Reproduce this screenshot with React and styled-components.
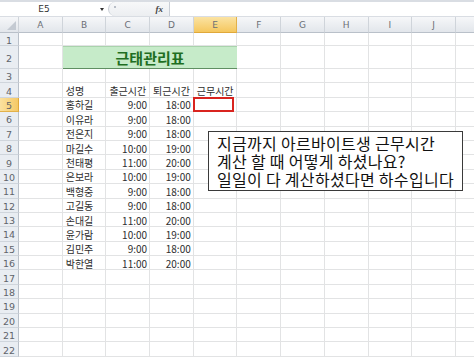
import React from "react";
import styled, { createGlobalStyle } from "styled-components";

const Global = createGlobalStyle`
  html, body { margin: 0; padding: 0; background: #ffffff; overflow: hidden; }
  body { font-family: "Noto Sans CJK KR", "Noto Sans", sans-serif; }
  #root { width: 474px; height: 357px; }
`;

const Page = styled.div`
  position: relative;
  width: 474px;
  height: 357px;
  overflow: hidden;
  background: #fff;
`;

const FormulaStrip = styled.div`
  background: #d9dde3;
  padding: 2px 0 1px 0;
`;

const FormulaBar = styled.div`
  display: flex;
  height: 14px;
  background: #fff;
`;

const NameBox = styled.div`
  width: 108px;
  display: flex;
  align-items: center;
  font-size: 9px;
  color: #333;
  font-family: "DejaVu Sans", sans-serif;
  background: #fff;
`;

const NameText = styled.span`
  flex: 1;
  text-align: center;
  padding-right: 12px;
`;

const Arrow = styled.span`
  width: 0;
  height: 0;
  border-left: 2.5px solid transparent;
  border-right: 2.5px solid transparent;
  border-top: 3px solid #333;
  margin-right: 4px;
`;

const Grip = styled.div`
  width: 60px;
  display: flex;
  align-items: center;
  background: linear-gradient(#f7f8f9, #eceef1);
  border-left: 1px solid #c9ced6;
  border-radius: 7px 0 0 7px;
`;

const Dot = styled.span`
  width: 2px;
  height: 2px;
  background: #b8bec7;
  margin-left: 5px;
  margin-top: -4px;
`;

const Fx = styled.span`
  margin-left: auto;
  margin-right: 6px;
  font-family: "Liberation Serif", serif;
  font-style: italic;
  font-weight: bold;
  font-size: 9px;
  color: #444;
`;

const FormulaInput = styled.div`
  flex: 1;
  background: #fff;
  border-left: 1px solid #c9ced6;
`;

const Sheet = styled.div`
  display: grid;
  grid-template-columns: 19px repeat(11, 43.7px);
  grid-template-rows: 16px 13px 23px repeat(20, 14.4px);
`;

const ColHead = styled.div`
  background: ${(p) =>
    p.$active
      ? "linear-gradient(#fbe3a3, #f5c75e)"
      : "linear-gradient(#f6f7f9, #e2e6eb)"};
  border-right: 1px solid ${(p) => (p.$active ? "#e2b14a" : "#cfd4da")};
  border-bottom: 1px solid ${(p) => (p.$active ? "#e0a83a" : "#b9c0c9")};
  color: #6b6f75;
  font-family: "DejaVu Sans", sans-serif;
  font-size: 9px;
  display: flex;
  align-items: center;
  justify-content: center;
  box-sizing: border-box;
`;

const Corner = styled(ColHead)`
  position: relative;
  &::after {
    content: "";
    position: absolute;
    right: 2px;
    bottom: 2px;
    width: 0;
    height: 0;
    border-left: 9px solid transparent;
    border-bottom: 9px solid #c4cad2;
  }
`;

const RowHead = styled.div`
  background: ${(p) => (p.$active ? "linear-gradient(90deg, #fbe1a0, #f5c965)" : "#e9edf2")};
  border-right: 1px solid ${(p) => (p.$active ? "#e0a83a" : "#b9c0c9")};
  border-bottom: 1px solid ${(p) => (p.$active ? "#e2b14a" : "#cfd5dc")};
  color: #5f646b;
  font-family: "DejaVu Sans", sans-serif;
  font-size: 9.5px;
  display: flex;
  align-items: center;
  justify-content: center;
  box-sizing: border-box;
  padding-top: 2px;
`;

const Cell = styled.div`
  position: relative;
  border-right: 1px solid #e2e3e4;
  border-bottom: 1px solid #e2e3e4;
  box-sizing: border-box;
  font-size: 10px;
  color: #2e2e2e;
  display: flex;
  align-items: center;
  justify-content: ${(p) => (p.$right ? "flex-end" : "flex-start")};
  padding: 1px 2px 0 3px;
  white-space: nowrap;
`;

const TitleCell = styled.div`
  grid-column: span 4;
  background: #c6ebc9;
  border-top: 1px solid #a9d3ac;
  border-bottom: 1px solid #5f8f62;
  box-sizing: border-box;
  display: flex;
  align-items: center;
  justify-content: center;
  font-size: 15px;
  font-weight: bold;
  color: #1f6e22;
`;

const Selection = styled.div`
  position: absolute;
  left: -1px;
  top: -1px;
  right: 2px;
  bottom: -1px;
  border: 2px solid #d9241f;
`;

const Note = styled.div`
  position: absolute;
  left: 208px;
  top: 131px;
  width: 255px;
  height: 60px;
  box-sizing: border-box;
  border: 1.5px solid #3a3a3a;
  background: #fff;
  padding: 2px 0 0 8px;
  font-size: 16px;
  letter-spacing: 0.3px;
  line-height: 18px;
  color: #111;
  white-space: nowrap;
`;

const letters = ["A", "B", "C", "D", "E", "F", "G", "H", "I", "J", ""];

const people = [
  ["홍하길", "9:00", "18:00"],
  ["이유라", "9:00", "18:00"],
  ["전은지", "9:00", "18:00"],
  ["마길수", "10:00", "19:00"],
  ["천태평", "11:00", "20:00"],
  ["은보라", "10:00", "19:00"],
  ["백형중", "9:00", "18:00"],
  ["고길동", "9:00", "18:00"],
  ["손대길", "11:00", "20:00"],
  ["윤가람", "10:00", "19:00"],
  ["김민주", "9:00", "18:00"],
  ["박한열", "11:00", "20:00"],
];

function rowCells(r) {
  const cells = [];
  if (r === 2) {
    cells.push(<Cell key="a" />);
    cells.push(<TitleCell key="t">근태관리표</TitleCell>);
    for (let c = 5; c < 11; c++) cells.push(<Cell key={c} />);
    return cells;
  }
  for (let c = 0; c < 11; c++) {
    let content = null;
    let right = false;
    if (r === 4) {
      content = ["", "성명", "출근시간", "퇴근시간", "근무시간"][c] || null;
    } else if (r >= 5 && r <= 16) {
      const p = people[r - 5];
      if (c === 1) content = p[0];
      if (c === 2) { content = p[1]; right = true; }
      if (c === 3) { content = p[2]; right = true; }
    }
    cells.push(
      <Cell key={c} $right={right}>
        {content}
        {r === 5 && c === 4 ? <Selection /> : null}
      </Cell>
    );
  }
  return cells;
}

export default function App() {
  const rows = [];
  for (let r = 1; r <= 22; r++) {
    rows.push(
      <React.Fragment key={r}>
        <RowHead $active={r === 5}>{r}</RowHead>
        {rowCells(r)}
      </React.Fragment>
    );
  }
  return (
    <Page>
      <Global />
      <FormulaStrip>
        <FormulaBar>
          <NameBox>
            <NameText>E5</NameText>
            <Arrow />
          </NameBox>
          <Grip>
            <Dot />
            <Fx>fx</Fx>
          </Grip>
          <FormulaInput />
        </FormulaBar>
      </FormulaStrip>
      <Sheet>
        <Corner />
        {letters.map((l, i) => (
          <ColHead key={i} $active={l === "E"}>{l}</ColHead>
        ))}
        {rows}
      </Sheet>
      <Note>
        지금까지 아르바이트생 근무시간
        <br />
        계산 할 때 어떻게 하셨나요?
        <br />
        일일이 다 계산하셨다면 하수입니다
      </Note>
    </Page>
  );
}
